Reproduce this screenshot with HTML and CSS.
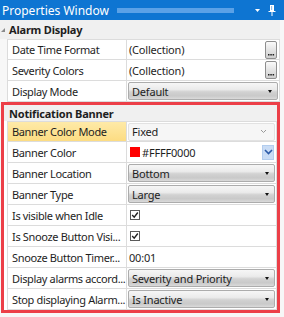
FILE: index.html
```html
<!DOCTYPE html>
<html lang="en">
<head>
    <meta charset="UTF-8">
    <meta name="viewport" content="width=device-width, initial-scale=1.0">
    <title>Properties Window</title>
    <link rel="stylesheet" href="styles.css">
</head>
<body>
    <div class="panel">
        <div class="titlebar">
            <span class="title">Properties Window</span>
            <span class="grip"></span>
            <svg class="tb-icon" width="8" height="20" viewBox="0 0 8 20">
                <path d="M1 9h5l-2.5 3z" fill="#fff"/>
            </svg>
            <svg class="tb-icon" width="8" height="20" viewBox="0 0 8 20">
                <path d="M2 5h4v6H2z" fill="#fff"/>
                <path d="M3 6h1.2v4H3z" fill="#8fc0ee"/>
                <path d="M0.5 11h7v1h-7z" fill="#fff"/>
                <path d="M3.5 12h1v4h-1z" fill="#fff"/>
            </svg>
        </div>

        <div class="category">
            <svg class="toggle" width="9" height="8" viewBox="0 0 9 8">
                <path d="M5 2v4H1z" fill="#8a8a8a"/>
            </svg>
            Alarm Display
        </div>
        <div class="rows">
            <div class="row">
                <div class="name">Date Time Format</div>
                <div class="value">
                    <span class="text">(Collection)</span>
                    <span class="ellipsis">
                        <svg width="10" height="16" viewBox="0 0 10 16"><path d="M2 12h1.5v1.5H2zM4.3 12h1.5v1.5H4.3zM6.6 12h1.5v1.5H6.6z" fill="#222"/></svg>
                    </span>
                </div>
            </div>
            <div class="row">
                <div class="name">Severity Colors</div>
                <div class="value">
                    <span class="text">(Collection)</span>
                    <span class="ellipsis">
                        <svg width="10" height="16" viewBox="0 0 10 16"><path d="M2 12h1.5v1.5H2zM4.3 12h1.5v1.5H4.3zM6.6 12h1.5v1.5H6.6z" fill="#222"/></svg>
                    </span>
                </div>
            </div>
            <div class="row">
                <div class="name">Display Mode</div>
                <div class="value">
                    <div class="combo"><span>Default</span><span class="arrow"></span></div>
                </div>
            </div>
        </div>

        <div class="highlight">
            <div class="category inner">Notification Banner</div>
            <div class="rows">
                <div class="row">
                    <div class="name selected">Banner Color Mode</div>
                    <div class="value">
                        <div class="combo flat">
                            <span>Fixed</span>
                            <svg width="7" height="5" viewBox="0 0 7 5"><path d="M1 1l2.5 2.5L6 1" fill="none" stroke="#9a9a9a" stroke-width="1"/></svg>
                        </div>
                    </div>
                </div>
                <div class="row">
                    <div class="name">Banner Color</div>
                    <div class="value">
                        <span class="swatch"></span>
                        <span class="text hex">#FFFF0000</span>
                        <span class="color-btn">
                            <svg width="9" height="6" viewBox="0 0 9 6"><path d="M1 1l3.5 3.5L8 1" fill="none" stroke="#2c5aa8" stroke-width="1.6"/></svg>
                        </span>
                    </div>
                </div>
                <div class="row">
                    <div class="name">Banner Location</div>
                    <div class="value">
                        <div class="combo"><span>Bottom</span><span class="arrow"></span></div>
                    </div>
                </div>
                <div class="row">
                    <div class="name">Banner Type</div>
                    <div class="value">
                        <div class="combo"><span>Large</span><span class="arrow"></span></div>
                    </div>
                </div>
                <div class="row">
                    <div class="name">Is visible when Idle</div>
                    <div class="value">
                        <span class="check"><svg width="8" height="8" viewBox="0 0 8 8"><path d="M1.2 4l2 2.2L6.8 1.5" fill="none" stroke="#222" stroke-width="1.4"/></svg></span>
                    </div>
                </div>
                <div class="row">
                    <div class="name">Is Snooze Button Visi...</div>
                    <div class="value">
                        <span class="check"><svg width="8" height="8" viewBox="0 0 8 8"><path d="M1.2 4l2 2.2L6.8 1.5" fill="none" stroke="#222" stroke-width="1.4"/></svg></span>
                    </div>
                </div>
                <div class="row">
                    <div class="name">Snooze Button Timer...</div>
                    <div class="value"><span class="text">00:01</span></div>
                </div>
                <div class="row">
                    <div class="name">Display alarms accord...</div>
                    <div class="value">
                        <div class="combo"><span>Severity and Priority</span><span class="arrow"></span></div>
                    </div>
                </div>
                <div class="row">
                    <div class="name">Stop displaying Alarm...</div>
                    <div class="value">
                        <div class="combo"><span>Is Inactive</span><span class="arrow"></span></div>
                    </div>
                </div>
            </div>
        </div>
    </div>
</body>
</html>
```

FILE: styles.css
```css
* {
    margin: 0;
    padding: 0;
    box-sizing: border-box;
}

body {
    background: #fff;
    font-family: "Segoe UI", "Noto Sans", sans-serif;
    font-size: 11px;
    letter-spacing: -0.2px;
    color: #1e1e1e;
}

.panel {
    width: 284px;
    background: #f7f7f7;
    padding-bottom: 4px;
}

.titlebar {
    height: 20px;
    background: #0e75d2;
    color: #fff;
    display: flex;
    align-items: center;
    padding: 0 8px 0 2px;
}

.title {
    font-size: 12px;
    letter-spacing: 0;
    white-space: nowrap;
}

.grip {
    flex: 1;
    height: 5px;
    margin: 0 14px 0 8px;
    background-image: radial-gradient(#5ea3e8 0.7px, transparent 0.9px);
    background-size: 2px 2px;
}

.tb-icon {
    display: block;
    margin-left: 6px;
}

.category {
    height: 19px;
    width: 280px;
    background: #f0f0f0;
    display: flex;
    align-items: center;
    font-weight: bold;
}

.toggle {
    display: block;
}

.category.inner {
    width: auto;
    height: 16px;
    padding-left: 5px;
}

.rows {
    margin-left: 7px;
    border-top: 1px solid #dcdcdc;
    border-right: 1px solid #dcdcdc;
    background: #fff;
    width: 273px;
}

.row {
    display: grid;
    grid-template-columns: 120px 1fr;
    height: 21px;
    border-bottom: 1px solid #dcdcdc;
}

.rows .row:first-child {
    height: 20px;
}

.name {
    border-left: 1px solid #dcdcdc;
    border-right: 1px solid #dcdcdc;
    padding-left: 4px;
    display: flex;
    align-items: center;
    white-space: nowrap;
    letter-spacing: -0.35px;
    overflow: hidden;
}

.name.selected {
    background: linear-gradient(#feeaa8, #fcdc82);
}

.value {
    display: flex;
    align-items: center;
    padding: 0 1px 0 2px;
    white-space: nowrap;
    min-width: 0;
}

.text {
    flex: 1;
}

.text.hex {
    margin-left: 2px;
}

.ellipsis {
    width: 12px;
    height: 18px;
    border: 1px solid #8e8e8e;
    border-radius: 2px;
    background: linear-gradient(#fafafa, #e4e4e4 50%, #cfcfcf);
    display: flex;
    justify-content: center;
    margin-right: 1px;
}

.ellipsis svg {
    display: block;
}

.combo {
    flex: 1;
    height: 18px;
    margin-left: -1px;
    border: 1px solid #acacac;
    border-radius: 2px;
    background: linear-gradient(#f6f6f6 0%, #ebebeb 40%, #d2d2d2 55%, #c9c9c9 80%, #dadada 100%);
    display: flex;
    align-items: center;
    justify-content: space-between;
    padding: 0 5px 0 3px;
}

.combo.flat {
    background: #f6f6f6;
    border-color: #e2e2e2;
    padding-right: 7px;
}

.arrow {
    width: 0;
    height: 0;
    border-left: 2.5px solid transparent;
    border-right: 2.5px solid transparent;
    border-top: 3px solid #111;
}

.swatch {
    width: 10px;
    height: 10px;
    background: #ff0000;
    margin-left: 1px;
}

.color-btn {
    width: 12px;
    height: 15px;
    background: #c9dcf5;
    border: 1px solid #b3cdee;
    display: flex;
    align-items: center;
    justify-content: center;
    margin-right: 1px;
}

.check {
    width: 10px;
    height: 10px;
    border: 1px solid #5a5a5a;
    background: #fff;
    display: flex;
    align-items: center;
    justify-content: center;
    margin-left: 1px;
}

.highlight {
    margin-left: 1px;
    width: 279px;
    border: 3px solid #ec3f48;
    background: #fff;
}

.highlight .rows {
    margin-left: 3px;
    width: 270px;
}
```
